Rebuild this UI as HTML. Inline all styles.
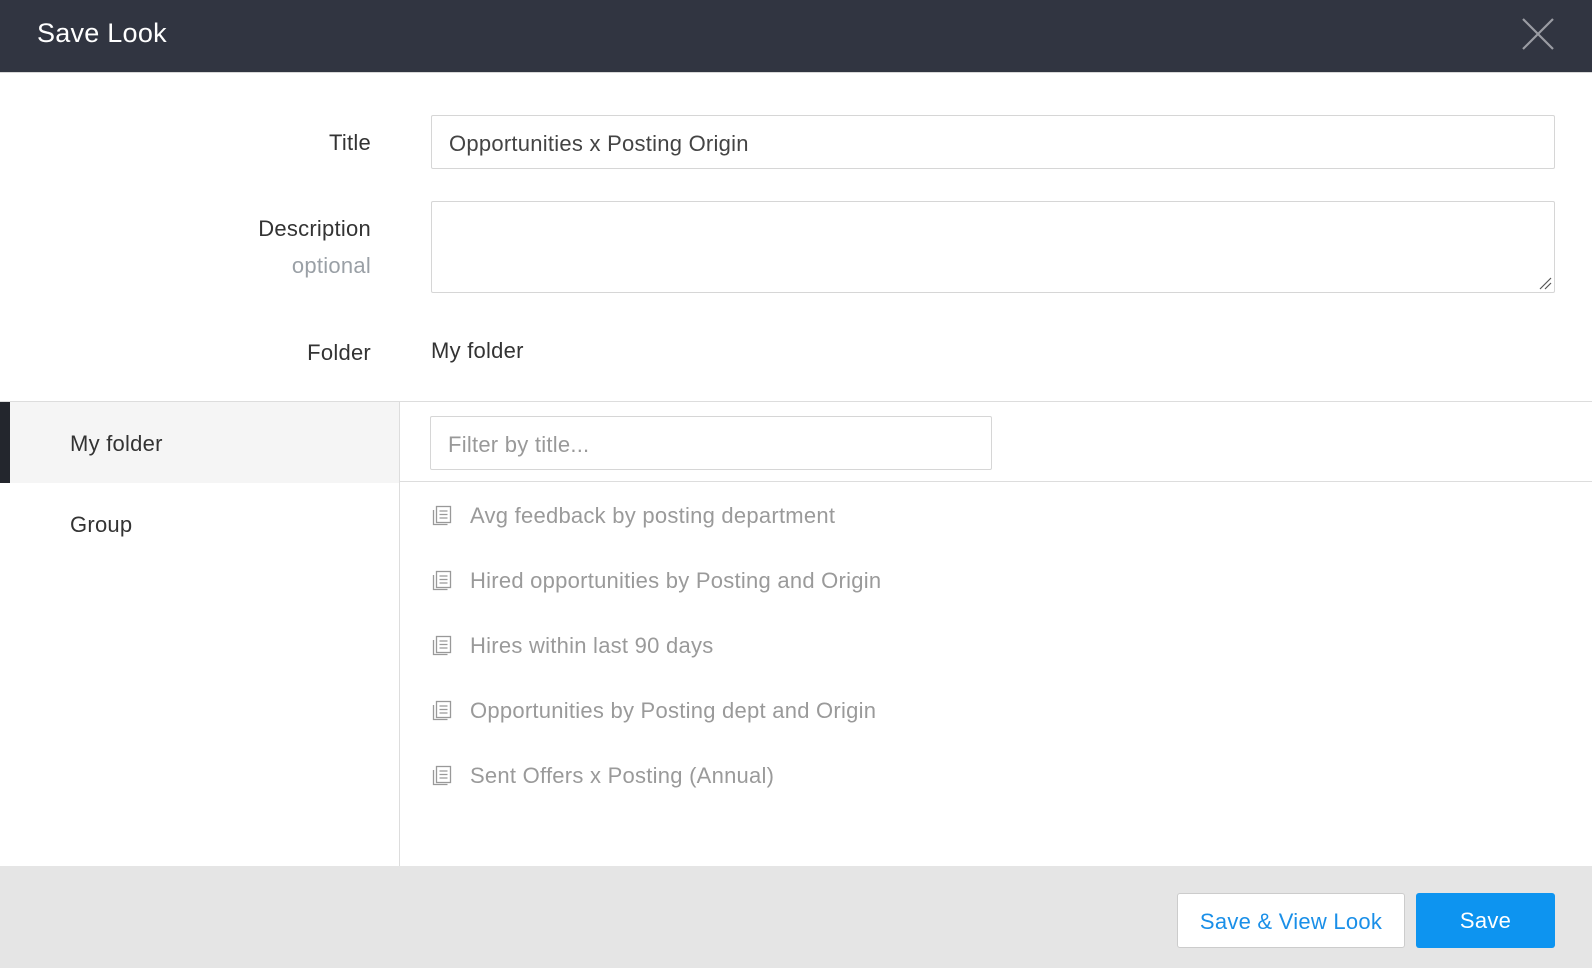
<!DOCTYPE html>
<html><head><meta charset="utf-8"><style>
*{box-sizing:border-box;margin:0;padding:0}
body{width:1592px;height:968px;overflow:hidden;background:#fff;font-family:"Liberation Sans",sans-serif;position:relative;color:#333;letter-spacing:0.25px}
.hdr{position:absolute;left:0;top:0;width:1592px;height:73px;background:#313541;border-bottom:1px solid #d8d8d8}
.hdr h1{position:absolute;left:37px;top:18px;font-size:27px;font-weight:normal;color:#fff}
.lbl{position:absolute;right:1221px;font-size:22px;color:#333;text-align:right}
.inp{position:absolute;left:431px;width:1124px;border:1px solid #d6d6d6;border-radius:2px;background:#fff}
.abs{position:absolute}
.item{position:absolute;left:432px;font-size:22px;color:#9a9a9a}
.item svg{position:absolute;left:0;top:3px}
.item span{position:absolute;left:38px;top:1px;white-space:nowrap}
.btn{position:absolute;top:893px;height:55px;border-radius:3px;font-size:22px;text-align:center;line-height:55px}
</style></head><body>
<div class="hdr"><h1>Save Look</h1>
<svg class="abs" style="left:1521px;top:17px" width="34" height="34"><path d="M2 2L32 32M32 2L2 32" stroke="#9a9ca3" stroke-width="2.2"/></svg></div>
<div class="lbl" style="top:130px">Title</div>
<div class="inp" style="top:115px;height:54px"><div style="position:absolute;left:17px;top:15px;font-size:22px;color:#444">Opportunities x Posting Origin</div></div>
<div class="lbl" style="top:216px">Description</div>
<div class="lbl" style="top:253px;color:#9aa0a6">optional</div>
<div class="inp" style="top:201px;height:92px"><svg class="abs" style="right:2px;bottom:2px" width="14" height="14"><path d="M2 13L13 2M7 13L13 7" stroke="#555" stroke-width="1.2"/></svg></div>
<div class="lbl" style="top:340px">Folder</div>
<div class="abs" style="left:431px;top:338px;font-size:22px;color:#333">My folder</div>
<div class="abs" style="left:0;top:401px;width:1592px;height:1px;background:#ddd"></div>
<div class="abs" style="left:0;top:402px;width:399px;height:81px;background:#f5f5f5;border-left:10px solid #23262d"></div>
<div class="abs" style="left:70px;top:431px;font-size:22px">My folder</div>
<div class="abs" style="left:70px;top:512px;font-size:22px">Group</div>
<div class="abs" style="left:399px;top:402px;width:1px;height:464px;background:#ddd"></div>
<div class="abs" style="left:430px;top:416px;width:562px;height:54px;border:1px solid #d6d6d6;border-radius:2px"><div style="position:absolute;left:17px;top:15px;font-size:22px;color:#999">Filter by title...</div></div>
<div class="abs" style="left:400px;top:481px;width:1192px;height:1px;background:#ddd"></div>
<svg width="0" height="0" style="position:absolute"><defs><g id="ic"><path d="M1.5 5v14.5h14" fill="none" stroke="#999" stroke-width="1.3"/><rect x="4.5" y="1.5" width="14" height="16" fill="#fff" stroke="#999" stroke-width="1.3"/><path d="M7.5 6h8M7.5 9.5h8M7.5 13h8" stroke="#999" stroke-width="1.3"/></g></defs></svg>
<div class="item" style="top:502px"><svg width="22" height="22"><use href="#ic"/></svg><span>Avg feedback by posting department</span></div>
<div class="item" style="top:567px"><svg width="22" height="22"><use href="#ic"/></svg><span>Hired opportunities by Posting and Origin</span></div>
<div class="item" style="top:632px"><svg width="22" height="22"><use href="#ic"/></svg><span>Hires within last 90 days</span></div>
<div class="item" style="top:697px"><svg width="22" height="22"><use href="#ic"/></svg><span>Opportunities by Posting dept and Origin</span></div>
<div class="item" style="top:762px"><svg width="22" height="22"><use href="#ic"/></svg><span>Sent Offers x Posting (Annual)</span></div>
<div class="abs" style="left:0;top:866px;width:1592px;height:102px;background:#e5e5e5"></div>
<div class="btn" style="left:1177px;width:228px;background:#fff;border:1px solid #ccc;color:#1a8fe8">Save &amp; View Look</div>
<div class="btn" style="left:1416px;width:139px;background:#0d94f0;color:#fff">Save</div>
</body></html>
